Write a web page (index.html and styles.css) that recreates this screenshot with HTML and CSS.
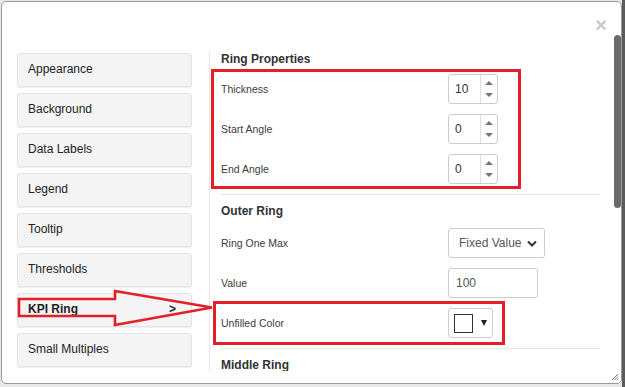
FILE: index.html
```html
<!doctype html>
<html lang="en">
<head>
    <title>KPI Ring - Format</title>
    <meta charset="utf-8">
    <meta name="viewport" content="width=device-width, initial-scale=1">
    <link rel="stylesheet" href="styles.css">
</head>
<body>
<div class="modal">
    <div class="modal-header">
        <span class="close">&times;</span>
    </div>
    <div class="modal-body">
        <ul class="nav">
            <li>Appearance</li>
            <li>Background</li>
            <li>Data Labels</li>
            <li>Legend</li>
            <li>Tooltip</li>
            <li>Thresholds</li>
            <li class="active">KPI Ring<span>&gt;</span></li>
            <li>Small Multiples</li>
        </ul>

        <div class="panel">
            <div class="panel-inner">
                <section class="group">
                    <h4>Ring Properties</h4>
                    <div class="fields marked">
                        <div class="row">
                            <label>Thickness</label>
                            <div class="spin"><span>10</span><div class="spin-btns"><i class="up"></i><i class="down"></i></div></div>
                        </div>
                        <div class="row">
                            <label>Start Angle</label>
                            <div class="spin"><span>0</span><div class="spin-btns"><i class="up"></i><i class="down"></i></div></div>
                        </div>
                        <div class="row">
                            <label>End Angle</label>
                            <div class="spin"><span>0</span><div class="spin-btns"><i class="up"></i><i class="down"></i></div></div>
                        </div>
                    </div>
                </section>

                <section class="group">
                    <h4>Outer Ring</h4>
                    <div class="row">
                        <label>Ring One Max</label>
                        <div class="select"><span>Fixed Value</span>
                            <svg width="10" height="7" viewBox="0 0 10 7"><path d="M1 1.5 L5 5.5 L9 1.5" fill="none" stroke="#333" stroke-width="2"/></svg>
                        </div>
                    </div>
                    <div class="row">
                        <label>Value</label>
                        <input class="text-input" type="text" value="100">
                    </div>
                    <div class="row marked-row">
                        <label>Unfilled Color</label>
                        <div class="color"><span class="swatch"></span><span class="caret"></span></div>
                    </div>
                </section>

                <section class="group">
                    <h4>Middle Ring</h4>
                </section>
            </div>
            <!-- scrollbar thumb (panel content continues below) -->
            <div class="scroll-thumb"></div>
        </div>
    </div>

    <!-- resize handle in the corner -->
    <svg class="grip" width="8" height="8" viewBox="0 0 8 8">
        <path d="M7 1 L1 7 M7 3.5 L3.5 7 M7 6 L6 7" stroke="#777" stroke-width="1"/>
    </svg>
</div>

<!-- annotation arrow pointing from the menu to the highlighted field -->
<svg class="arrow" width="625" height="387" viewBox="0 0 625 387">
    <polygon points="19,299 115,299 115,291 212,307.5 115,325 115,316 19,316" fill="none" stroke="#e3202a" stroke-width="2.6" stroke-linejoin="miter"/>
</svg>
</body>
</html>
```

FILE: styles.css
```css
html {
    height: 100%;
    background: linear-gradient(to right, #e8e8e8 622px, #5c5c5c 622px);
}
body {
    margin: 0;
    padding: 1px 0 0 1px;
    font-family: "Liberation Sans", Arial, sans-serif;
    color: #333;
}
.modal {
    position: relative;
    width: 621px;
    height: 383px;
    background: #fff;
    border: 1px solid #9a9a9a;
    border-radius: 5px;
    box-sizing: border-box;
    overflow: hidden;
}
.modal-header {
    height: 33px;
    display: flex;
    justify-content: flex-end;
    align-items: flex-end;
    padding-right: 14px;
    box-sizing: border-box;
}
.close {
    font-size: 20px;
    line-height: 20px;
    font-weight: bold;
    color: #c8c8c8;
}
.modal-body {
    display: flex;
    height: 336px;
}

/* left menu */
.nav {
    list-style: none;
    margin: 0;
    width: 207px;
    padding: 18px 0 0 15px;
    box-sizing: border-box;
    flex-shrink: 0;
}
.nav li {
    display: flex;
    justify-content: space-between;
    width: 175px;
    height: 34px;
    line-height: 31px;
    margin-bottom: 6px;
    padding: 0 15px 0 10px;
    box-sizing: border-box;
    font-size: 12px;
    color: #222;
    background: #f4f4f4;
    border: 1px solid #e3e3e3;
    border-radius: 3px;
    box-shadow: 0 1px 1px rgba(0,0,0,.07);
}
.nav li.active { font-weight: bold; }

/* right panel */
.panel {
    position: relative;
    width: 412px;
    height: 336px;
    overflow: hidden;
}
.scroll-thumb {
    position: absolute;
    top: 0;
    right: 0;
    width: 7px;
    height: 173px;
    background: #6b6b6b;
    border-radius: 4px;
}
.panel-inner {
    height: 100%;
    margin-top: 16px;
    padding: 0 21px 0 11px;
    border-left: 1px solid #e6e6e6;
}
.group + .group {
    margin-top: 5px;
    padding-top: 8px;
    border-top: 1px solid #e5e5e5;
}
.group h4 {
    margin: 0 0 4px;
    font-size: 12px;
    line-height: 16px;
    font-weight: bold;
    color: #333;
}
.group:first-child h4 { margin-bottom: 2px; }
.row {
    display: flex;
    align-items: center;
    height: 40px;
}
.row label {
    width: 227px;
    flex-shrink: 0;
    font-size: 10.5px;
    color: #3b3b3b;
}

/* red highlight boxes */
.marked {
    width: 310px;
    margin-left: -10px;
    padding-left: 10px;
    box-sizing: border-box;
    outline: 3px solid #e3202a;
    outline-offset: -3px;
}
.marked-row {
    width: 288px;
    margin-left: -6px;
    padding-left: 6px;
    box-sizing: border-box;
    outline: 3px solid #e3202a;
    outline-offset: -1px;
}

/* form controls */
.spin {
    display: flex;
    width: 50px;
    height: 30px;
    border: 1px solid #ccc;
    border-radius: 3px;
    box-sizing: border-box;
    font-size: 12px;
    color: #333;
}
.spin span {
    flex: 1;
    line-height: 28px;
    padding-left: 6px;
}
.spin-btns {
    width: 16px;
    border-left: 1px solid #ddd;
    display: flex;
    flex-direction: column;
    align-items: center;
    justify-content: center;
    gap: 8px;
}
.spin-btns i {
    width: 0;
    height: 0;
    border-left: 4px solid transparent;
    border-right: 4px solid transparent;
}
.spin-btns .up { border-bottom: 4px solid #777; }
.spin-btns .down { border-top: 4px solid #777; }

.select {
    display: flex;
    align-items: center;
    justify-content: space-between;
    width: 97px;
    height: 30px;
    padding: 0 7px 0 10px;
    border: 1px solid #ccc;
    border-radius: 3px;
    box-sizing: border-box;
    font-size: 12px;
    color: #555;
}
.text-input {
    width: 90px;
    height: 30px;
    margin: 0;
    padding: 0 7px;
    border: 1px solid #ccc;
    border-radius: 3px;
    box-sizing: border-box;
    font-family: inherit;
    font-size: 12px;
    color: #555;
    outline: none;
}
.color {
    display: flex;
    align-items: center;
    gap: 8px;
    width: 45px;
    height: 30px;
    padding-left: 5px;
    border: 1px solid #ccc;
    border-radius: 3px;
    box-sizing: border-box;
}
.swatch {
    width: 19px;
    height: 19px;
    border: 1px solid #333;
    box-sizing: border-box;
    background: #fff;
}
.caret {
    width: 0;
    height: 0;
    border-left: 3.5px solid transparent;
    border-right: 3.5px solid transparent;
    border-top: 6px solid #222;
}

.grip {
    position: absolute;
    right: 2px;
    bottom: 2px;
}
.arrow {
    position: absolute;
    top: 0;
    left: 0;
    pointer-events: none;
}
```
